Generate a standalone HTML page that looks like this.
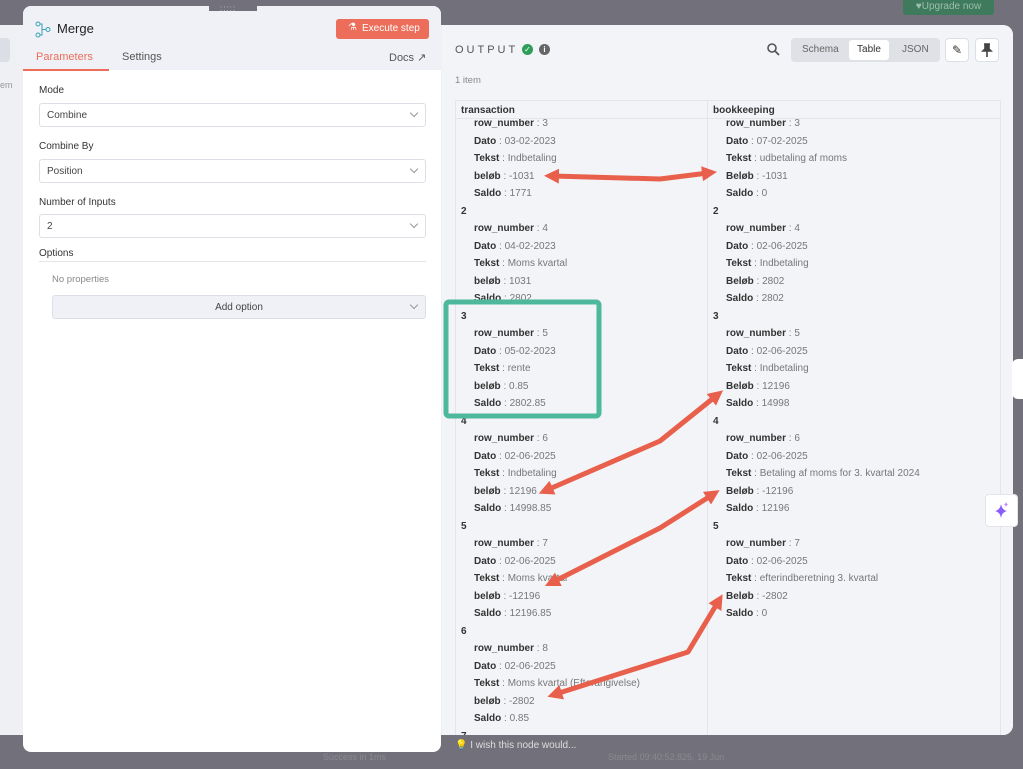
<!DOCTYPE html>
<html><head><meta charset="utf-8"><style>
*{box-sizing:border-box;margin:0;padding:0}
body{width:1023px;height:769px;overflow:hidden;background:#72717b;font-family:"Liberation Sans",sans-serif;position:relative;color:#333}
.abs{position:absolute}
.bg{left:0;top:25px;width:1013px;height:710px;background:#eff0f4;border-radius:0 10px 10px 0}
.left{left:23px;top:6px;width:418px;height:746px;background:#fff;border-radius:8px;overflow:hidden}
.lhead{left:0;top:0;width:418px;height:64px;background:#f0f1f6}
.lbl{font-size:10px;color:#333}
.sel{left:16px;width:387px;height:24px;border:1px solid #dcdfe6;border-radius:3px;background:#fff;font-size:10px;padding:6px 0 0 7px;color:#444}
.chev{position:absolute;right:8px;top:6px;width:6px;height:6px;border-right:1px solid #999;border-bottom:1px solid #999;transform:rotate(45deg)}
.out{left:442px;top:25px;width:571px;height:710px;background:#f3f4f8;border-radius:0 10px 10px 0}
.tbl{left:455px;top:100px;width:546px;height:635px;border:1px solid #e3e5ea;border-bottom:none;overflow:hidden}
.t{position:absolute;font-size:10px;color:#777;white-space:nowrap}
.t b{color:#333}
.ix{position:absolute;font-size:10px;font-weight:bold;color:#333}
</style></head><body>
<div class="abs bg"></div>
<div class="abs" style="left:0;top:38px;width:10px;height:24px;background:#dcdee5;border-radius:0 4px 4px 0"></div>
<div class="abs" style="left:0;top:80px;font-size:9px;color:#999">em</div>
<div class="abs" style="left:903px;top:0;width:91px;height:15px;background:#3f7a5c;border-radius:0 0 3px 3px;color:#9cbfae;font-size:10px;text-align:center;padding-top:1px">♥Upgrade now</div>

<div class="abs out">
  <div class="abs" style="left:13px;top:19px;font-size:11px;letter-spacing:3px;color:#555">OUTPUT</div>
  <div class="abs" style="left:80px;top:19px;width:11px;height:11px;border-radius:50%;background:#2f9e5b;color:#fff;font-size:8px;text-align:center;line-height:11px">✓</div>
  <div class="abs" style="left:97px;top:19px;width:11px;height:11px;border-radius:50%;background:#666;color:#fff;font-size:8px;text-align:center;line-height:11px;font-weight:bold">i</div>
  <svg class="abs" style="left:325px;top:18px" width="13" height="13"><circle cx="5" cy="5" r="4" stroke="#555" stroke-width="1.6" fill="none"/><path d="M8 8 L12 12" stroke="#555" stroke-width="1.8"/></svg>
  <div class="abs" style="left:349px;top:13px;width:149px;height:24px;background:#dfe1e7;border-radius:4px"></div>
  <div class="abs" style="left:360px;top:19px;font-size:10px;color:#666">Schema</div>
  <div class="abs" style="left:407px;top:15px;width:40px;height:20px;background:#fff;border-radius:3px;font-size:10px;text-align:center;padding-top:4px;color:#333">Table</div>
  <div class="abs" style="left:460px;top:19px;font-size:10px;color:#666">JSON</div>
  <div class="abs" style="left:503px;top:13px;width:24px;height:24px;background:#fff;border:1px solid #dcdfe6;border-radius:4px;text-align:center;font-size:12px;line-height:22px">✎</div>
  <div class="abs" style="left:533px;top:13px;width:24px;height:24px;background:#fff;border:1px solid #dcdfe6;border-radius:4px"><svg width="22" height="22"><path d="M8 5h6M9 5v5l-2 2h8l-2-2V5M11 12v6" stroke="#444" stroke-width="1.6" fill="#444"/></svg></div>
  <div class="abs" style="left:13px;top:50px;font-size:9.5px;color:#888">1 item</div>
</div>

<div class="abs tbl">
  <div id="rows"></div>
  <div class="abs" style="left:251px;top:0;width:1px;height:635px;background:#e3e5ea"></div>
  <div class="abs" style="left:0;top:0;width:546px;height:18px;border-bottom:1px solid #e3e5ea;background:#f3f4f8"></div>
  <div class="abs" style="left:251px;top:0;width:1px;height:18px;background:#e3e5ea"></div>
  <div class="abs" style="left:5px;top:4px;font-size:10px;font-weight:bold;color:#333">transaction</div>
  <div class="abs" style="left:257px;top:4px;font-size:10px;font-weight:bold;color:#333">bookkeeping</div>
</div>

<div class="abs" style="left:1012px;top:359px;width:11px;height:40px;background:#fff;border-radius:6px 0 0 6px"></div>
<div class="abs" style="left:985px;top:494px;width:33px;height:33px;background:#fff;border-radius:4px;border:1px solid #e3e5ea"><svg width="31" height="31"><path d="M15 9 Q16 15 21 16 Q16 17 15 23 Q14 17 9 16 Q14 15 15 9Z" fill="#8b5cf6"/><path d="M20 7 Q20.5 9 22 9.5 Q20.5 10 20 12 Q19.5 10 18 9.5 Q19.5 9 20 7Z" fill="#c084fc"/></svg></div>

<svg class="abs" style="left:0;top:0" width="1023" height="769">
<defs><marker id="ah" markerWidth="3" markerHeight="3" refX="1.2" refY="1.5" orient="auto-start-reverse"><path d="M0 0 L3 1.5 L0 3Z" fill="#e8604c"/></marker></defs>
<g stroke="#e8604c" stroke-width="5" fill="none" marker-start="url(#ah)" marker-end="url(#ah)" stroke-linejoin="bevel">
<polyline points="553,176 660,179 708,173"/>
<polyline points="716,396 660,441 547,490"/>
<polyline points="712,495 660,528 553,582"/>
<polyline points="718,602 688,652 556,694"/>
</g>
<rect x="446" y="302" width="153" height="114" rx="3" stroke="#4db89b" stroke-width="5" fill="none"/>
</svg>

<div class="abs left">
  <div class="abs lhead"></div>
  <div class="abs" style="left:186px;top:-3px;width:48px;height:8px;background:#72717b"></div>
  <div class="abs" style="left:197px;top:-2px;font-size:8px;color:#ccc;letter-spacing:1px">:::::</div>
  <svg class="abs" style="left:12px;top:15px" width="16" height="17"><circle cx="3" cy="3" r="2" stroke="#3aa0b8" fill="none"/><circle cx="3" cy="14" r="2" stroke="#3aa0b8" fill="none"/><circle cx="13" cy="8.5" r="2" stroke="#3aa0b8" fill="none"/><path d="M5 3 H7 V14 H5 M7 8.5 H11" stroke="#3aa0b8" fill="none"/></svg>
  <div class="abs" style="left:34px;top:15px;font-size:13px;color:#222">Merge</div>
  <div class="abs" style="left:313px;top:13px;width:93px;height:20px;background:#ec6e5a;border-radius:3px;color:#fff;font-size:10px;padding:4px 0 0 26px">Execute step</div>
  <div class="abs" style="left:325px;top:16px;color:#fff;font-size:10px">⚗</div>
  <div class="abs" style="left:13px;top:45px;font-size:11px;color:#ec6e5a">Parameters</div>
  <div class="abs" style="left:0;top:63px;width:86px;height:2px;background:#ec6e5a"></div>
  <div class="abs" style="left:99px;top:45px;font-size:11px;color:#555">Settings</div>
  <div class="abs" style="left:366px;top:45px;font-size:11px;color:#555">Docs ↗</div>
  <div class="abs lbl" style="left:16px;top:79px">Mode</div>
  <div class="abs sel" style="top:97px">Combine<span class="chev"></span></div>
  <div class="abs lbl" style="left:16px;top:135px">Combine By</div>
  <div class="abs sel" style="top:153px">Position<span class="chev"></span></div>
  <div class="abs lbl" style="left:16px;top:191px">Number of Inputs</div>
  <div class="abs sel" style="top:208px">2<span class="chev"></span></div>
  <div class="abs lbl" style="left:16px;top:242px">Options</div>
  <div class="abs" style="left:16px;top:255px;width:387px;height:1px;background:#e3e5ea"></div>
  <div class="abs" style="left:29px;top:268px;font-size:9.5px;color:#888">No properties</div>
  <div class="abs sel" style="left:29px;width:374px;top:289px;height:24px;background:#f0f1f6;text-align:center;padding:6px 0 0 0">Add option<span class="chev"></span></div>
</div>

<div class="abs" style="left:455px;top:740px;font-size:10px;color:#ddd">💡 I wish this node would...</div>
<div class="abs" style="left:323px;top:752px;font-size:9px;color:#8a8992">Success in 1ms</div>
<div class="abs" style="left:608px;top:752px;font-size:9px;color:#8a8992">Started 09:40:52.826, 19 Jun</div>

<script>
var T=[["3","03-02-2023","Indbetaling","-1031","1771"],["4","04-02-2023","Moms kvartal","1031","2802"],["5","05-02-2023","rente","0.85","2802.85"],["6","02-06-2025","Indbetaling","12196","14998.85"],["7","02-06-2025","Moms kvartal","-12196","12196.85"],["8","02-06-2025","Moms kvartal (Efterangivelse)","-2802","0.85"]];
var B=[["3","07-02-2025","udbetaling af moms","-1031","0"],["4","02-06-2025","Indbetaling","2802","2802"],["5","02-06-2025","Indbetaling","12196","14998"],["6","02-06-2025","Betaling af moms for 3. kvartal 2024","-12196","12196"],["7","02-06-2025","efterindberetning 3. kvartal","-2802","0"]];
var h="",L=17.5;
function col(D,x,kb){for(var i=0;i<D.length;i++){var base=i*105+17;
 if(i>0)h+='<div class="ix" style="left:'+(x)+'px;top:'+(base-17.5)+'px">'+(i+1)+'</div>';
 var k=["row_number","Dato","Tekst",kb,"Saldo"];
 for(var j=0;j<5;j++){var y=base+j*L;h+='<div class="t" style="left:'+(x+13)+'px;top:'+y+'px"><b>'+k[j]+'</b> : '+D[i][j]+'</div>';}}}
col(T,5,"beløb");col(B,257,"Beløb");
h+='<div class="ix" style="left:5px;top:'+(6*105-0.5)+'px">7</div>';
document.getElementById("rows").innerHTML=h;
</script>
</body></html>
